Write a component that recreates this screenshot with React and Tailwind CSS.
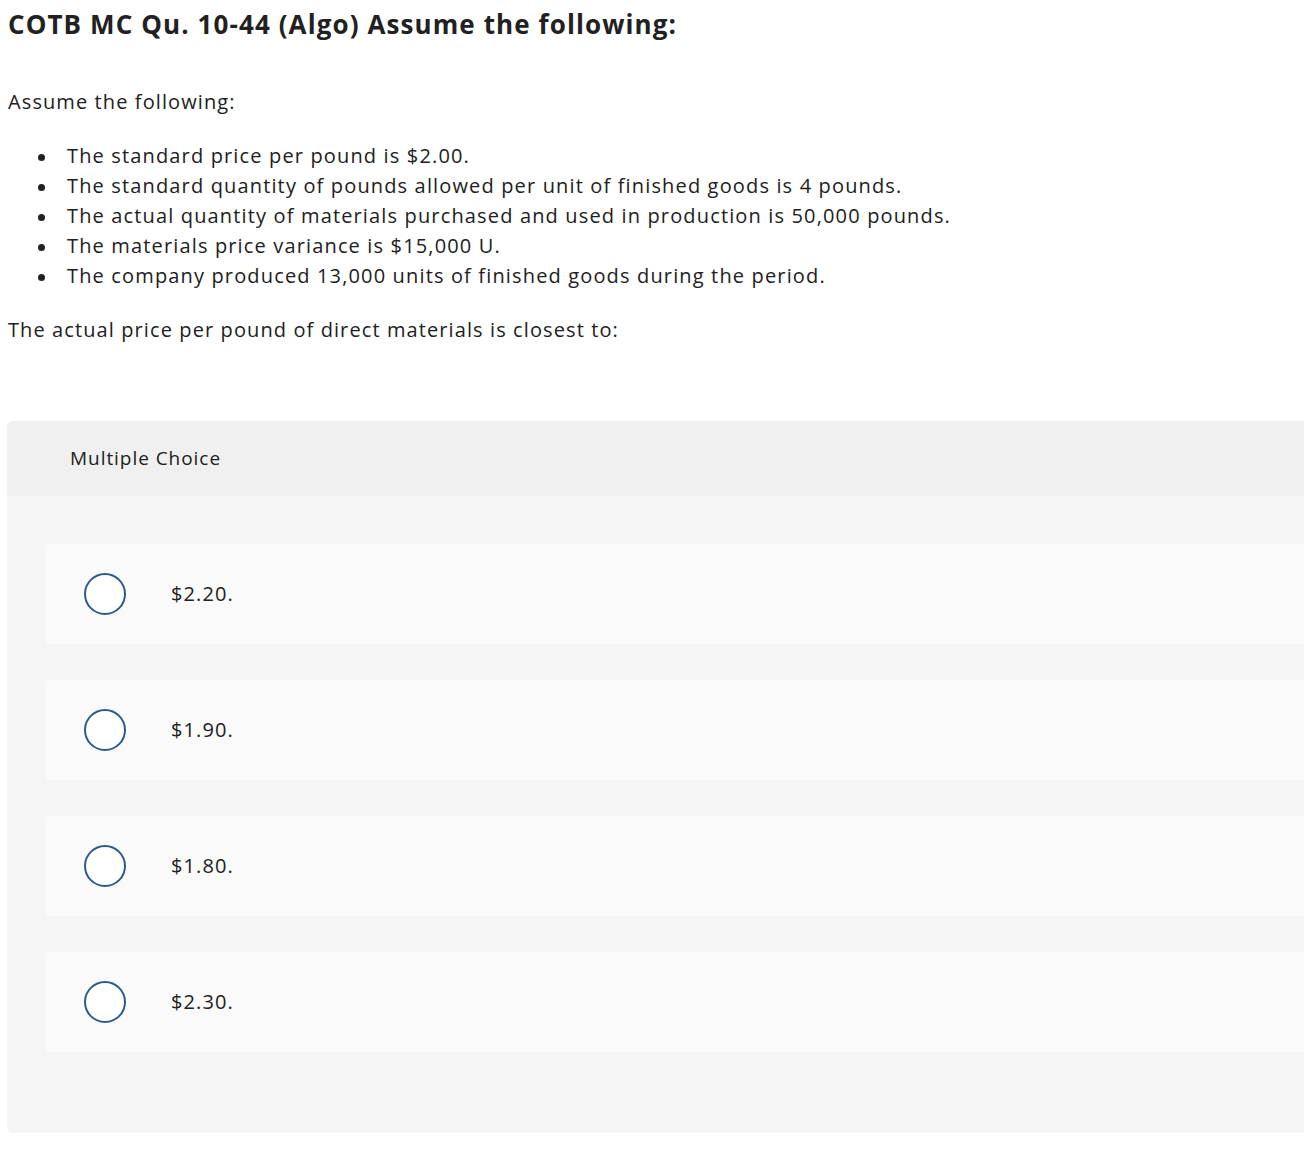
import React from "react";

const bullets = [
  "The standard price per pound is $2.00.",
  "The standard quantity of pounds allowed per unit of finished goods is 4 pounds.",
  "The actual quantity of materials purchased and used in production is 50,000 pounds.",
  "The materials price variance is $15,000 U.",
  "The company produced 13,000 units of finished goods during the period.",
];

const options = ["$2.20.", "$1.90.", "$1.80.", "$2.30."];

export default function App() {
  return (
    <div className="min-h-[1160px] bg-white text-[#212121] font-['Open_Sans','Liberation_Sans',sans-serif] overflow-hidden">
      <h1 className="pl-[8px] pt-[8px] text-[26px] leading-[32px] font-bold tracking-[1.1px]">
        COTB MC Qu. 10-44 (Algo) Assume the following:
      </h1>
      <p className="pl-[8px] mt-[47px] text-[20px] leading-[30px] tracking-[1.1px]">Assume the following:</p>
      <ul className="mt-[24px] text-[20px] leading-[30px] tracking-[1.15px]">
        {bullets.map((b) => (
          <li key={b} className="flex items-center">
            <span className="ml-[38px] mt-[3px] w-[7px] h-[7px] rounded-full bg-[#212121] shrink-0" />
            <span className="ml-[22px]">{b}</span>
          </li>
        ))}
      </ul>
      <p className="pl-[8px] mt-[24px] text-[20px] leading-[30px] tracking-[1.1px]">
        The actual price per pound of direct materials is closest to:
      </p>
      <section className="ml-[7px] mt-[76px] rounded-l-[6px] overflow-hidden bg-[#f5f5f5]">
        <div className="h-[75px] bg-[#f0f0f0] flex items-center pl-[63px] text-[19px] tracking-[0.95px]">
          Multiple Choice
        </div>
        <div className="pt-[48px] pb-[81px] pl-[39px] flex flex-col gap-[36px]">
          {options.map((o) => (
            <label
              key={o}
              className="h-[100px] bg-[#fafafa] rounded-l-[4px] flex items-center pl-[38px]"
            >
              <span className="w-[42px] h-[42px] rounded-full border-2 border-[#2c5a8c] bg-white shrink-0" />
              <span className="ml-[45px] text-[20px] tracking-[1.1px]">{o}</span>
            </label>
          ))}
        </div>
      </section>
    </div>
  );
}
